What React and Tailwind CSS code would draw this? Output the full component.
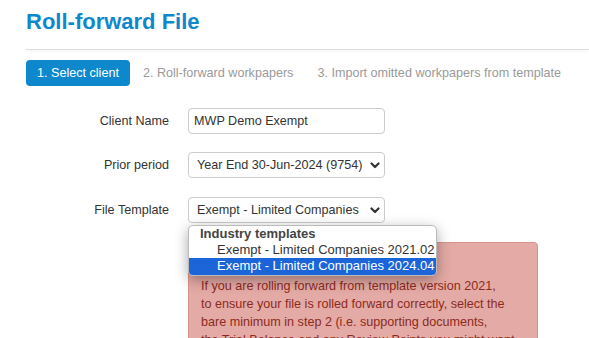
import React from "react";

const Chevron = () => (
  <svg width="10" height="7" viewBox="0 0 10 7" className="shrink-0">
    <path d="M1.5 1.5 L5 5 L8.5 1.5" fill="none" stroke="#333" strokeWidth="2.2" strokeLinecap="round" strokeLinejoin="round" />
  </svg>
);

const FormRow = ({ label, className = "", children }) => (
  <div className={`flex items-center ${className}`}>
    <label className="w-[143px] text-right">{label}</label>
    <div className="ml-[19px] relative">{children}</div>
  </div>
);

const SelectBox = ({ value }) => (
  <div className="flex items-center justify-between w-[197px] h-[26px] pl-[8px] pr-[4px] border border-[#ccc] rounded-[4px] bg-white text-[#333]">
    <span className="truncate">{value}</span>
    <Chevron />
  </div>
);

export default function App() {
  const steps = ["1. Select client", "2. Roll-forward workpapers", "3. Import omitted workpapers from template"];

  return (
    <div className="min-h-screen bg-white text-[12.6px] text-[#333] font-['Liberation_Sans',Arial,sans-serif] overflow-hidden">
      <div className="pl-[26px]">
        {/* Header */}
        <div className="h-[50px] border-b border-[#ddd] shadow-[0_3px_4px_-2px_rgba(0,0,0,0.06)]">
          <h1 className="pt-[8px] text-[22px] font-bold leading-[28px] text-[#0e88cc]">Roll-forward File</h1>
        </div>

        {/* Steps */}
        <div className="mt-[10px] flex gap-[2px]">
          {steps.map((s, i) => (
            <div
              key={s}
              className={`h-[26px] flex items-center px-[11px] rounded-[4px] ${
                i === 0 ? "bg-[#0e88cc] text-white" : "text-[#999]"
              }`}
            >
              {s}
            </div>
          ))}
        </div>

        {/* Form */}
        <div className="mt-[22px]">
          <FormRow label="Client Name">
            <div className="flex items-center w-[197px] h-[26px] pl-[5px] border border-[#ccc] rounded-[4px] text-[#333]">
              MWP Demo Exempt
            </div>
          </FormRow>

          <FormRow label="Prior period" className="mt-[18px]">
            <SelectBox value="Year End 30-Jun-2024 (9754)" />
          </FormRow>

          <FormRow label="File Template" className="mt-[19px]">
            <SelectBox value="Exempt - Limited Companies" />
            {/* open dropdown */}
            <div className="absolute z-10 left-0 top-[28px] w-[249px] bg-white border border-[#bbb] rounded-[5px] overflow-hidden shadow-[0_4px_14px_rgba(0,0,0,0.35)] text-[13px] leading-[16px]">
              <div className="h-[16px] pl-[11px] font-bold text-[#444]">Industry templates</div>
              <div className="h-[16px] pl-[28px] text-[#333]">Exempt - Limited Companies 2021.02</div>
              <div className="h-[17px] pl-[28px] bg-[#1b65d8] text-white">Exempt - Limited Companies 2024.04</div>
            </div>
          </FormRow>

          {/* Warning */}
          <div className="mt-[19px] ml-[162px] w-[350px] bg-[#e4aaa5] border border-[#d9938d] rounded-[4px] pt-[34px] pb-[15px] px-[12px] text-[#8c2a1e] leading-[18px]">
            <p>
              If you are rolling forward from template version 2021,
              <br />
              to ensure your file is rolled forward correctly, select the
              <br />
              bare minimum in step 2 (i.e. supporting documents,
              <br />
              the Trial Balance and any Review Points you might want to keep).
            </p>
          </div>
        </div>
      </div>
    </div>
  );
}
